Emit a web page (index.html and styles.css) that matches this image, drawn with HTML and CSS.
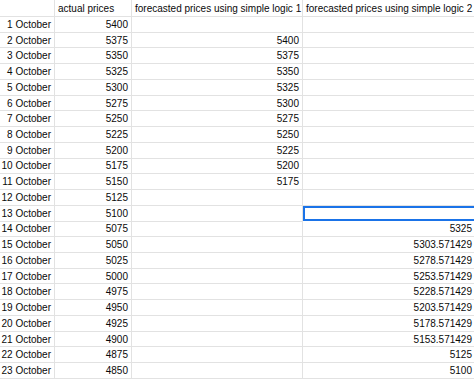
FILE: index.html
```html
<!DOCTYPE html>
<html>
<head>
<meta charset="utf-8">
<link rel="stylesheet" href="styles.css">
</head>
<body>
<div class="sheet">
  <div class="row head"><div class="c d"></div><div class="c t">actual prices</div><div class="c t">forecasted prices using simple logic 1</div><div class="c t">forecasted prices using simple logic 2</div></div>
  <div class="row"><div class="c d">1 October</div><div class="c n">5400</div><div class="c n"></div><div class="c n"></div></div>
  <div class="row"><div class="c d">2 October</div><div class="c n">5375</div><div class="c n">5400</div><div class="c n"></div></div>
  <div class="row"><div class="c d">3 October</div><div class="c n">5350</div><div class="c n">5375</div><div class="c n"></div></div>
  <div class="row"><div class="c d">4 October</div><div class="c n">5325</div><div class="c n">5350</div><div class="c n"></div></div>
  <div class="row"><div class="c d">5 October</div><div class="c n">5300</div><div class="c n">5325</div><div class="c n"></div></div>
  <div class="row"><div class="c d">6 October</div><div class="c n">5275</div><div class="c n">5300</div><div class="c n"></div></div>
  <div class="row"><div class="c d">7 October</div><div class="c n">5250</div><div class="c n">5275</div><div class="c n"></div></div>
  <div class="row"><div class="c d">8 October</div><div class="c n">5225</div><div class="c n">5250</div><div class="c n"></div></div>
  <div class="row"><div class="c d">9 October</div><div class="c n">5200</div><div class="c n">5225</div><div class="c n"></div></div>
  <div class="row"><div class="c d">10 October</div><div class="c n">5175</div><div class="c n">5200</div><div class="c n"></div></div>
  <div class="row"><div class="c d">11 October</div><div class="c n">5150</div><div class="c n">5175</div><div class="c n"></div></div>
  <div class="row"><div class="c d">12 October</div><div class="c n">5125</div><div class="c n"></div><div class="c n"></div></div>
  <div class="row"><div class="c d">13 October</div><div class="c n">5100</div><div class="c n"></div><div class="c n sel"></div></div>
  <div class="row"><div class="c d">14 October</div><div class="c n">5075</div><div class="c n"></div><div class="c n">5325</div></div>
  <div class="row"><div class="c d">15 October</div><div class="c n">5050</div><div class="c n"></div><div class="c n">5303.571429</div></div>
  <div class="row"><div class="c d">16 October</div><div class="c n">5025</div><div class="c n"></div><div class="c n">5278.571429</div></div>
  <div class="row"><div class="c d">17 October</div><div class="c n">5000</div><div class="c n"></div><div class="c n">5253.571429</div></div>
  <div class="row"><div class="c d">18 October</div><div class="c n">4975</div><div class="c n"></div><div class="c n">5228.571429</div></div>
  <div class="row"><div class="c d">19 October</div><div class="c n">4950</div><div class="c n"></div><div class="c n">5203.571429</div></div>
  <div class="row"><div class="c d">20 October</div><div class="c n">4925</div><div class="c n"></div><div class="c n">5178.571429</div></div>
  <div class="row"><div class="c d">21 October</div><div class="c n">4900</div><div class="c n"></div><div class="c n">5153.571429</div></div>
  <div class="row"><div class="c d">22 October</div><div class="c n">4875</div><div class="c n"></div><div class="c n">5125</div></div>
  <div class="row"><div class="c d">23 October</div><div class="c n">4850</div><div class="c n"></div><div class="c n">5100</div></div>
</div>
</body>
</html>
```

FILE: styles.css
```css
html, body {
  margin: 0;
  padding: 0;
  background: #ffffff;
  overflow: hidden;
}
.sheet {
  width: 474px;
  font-family: "Liberation Sans", Arial, sans-serif;
  font-size: 10px;
  color: #0a0a0a;
}
.row {
  display: grid;
  grid-template-columns: 55px 77px 171px 171px;
  height: 15.74px;
  box-sizing: border-box;
}
.row.head {
  height: 17px;
}
.c {
  box-sizing: border-box;
  border-right: 1px solid #e2e2e2;
  border-bottom: 1px solid #e2e2e2;
  padding: 0 3px;
  display: flex;
  align-items: center;
  white-space: nowrap;
  overflow: hidden;
}
.c:last-child {
  border-right: none;
}
.d, .n {
  justify-content: flex-end;
}
.t {
  justify-content: flex-start;
}
.c.n:last-child {
  padding-right: 2px;
}
.sel {
  box-shadow: inset 2px 2px 0 #1a73e8, inset 0 -2px 0 #1a73e8;
  border-bottom-color: transparent;
}
```
